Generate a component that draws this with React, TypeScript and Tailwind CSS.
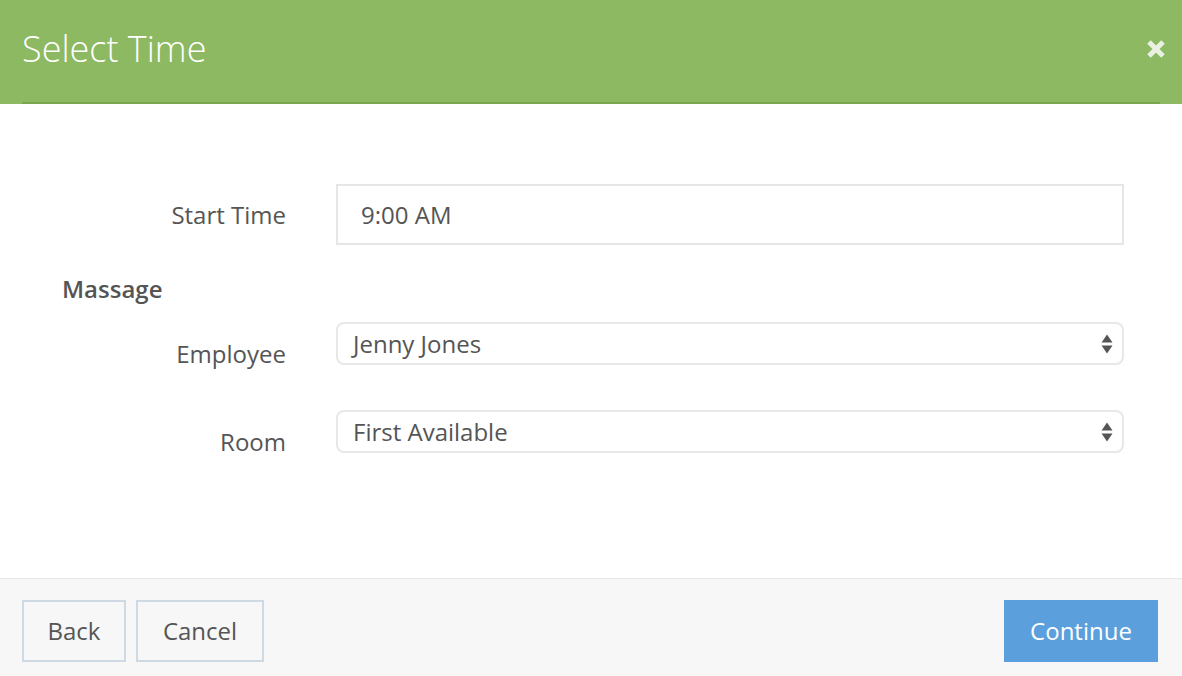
import React from "react";

function SelectArrows() {
  return (
    <svg width="12" height="21" viewBox="0 0 12 21" className="absolute right-[9px] top-1/2 -translate-y-1/2">
      <path d="M6 1 L11.5 9 L0.5 9 Z" fill="#555" />
      <path d="M0.5 12 L11.5 12 L6 20 Z" fill="#555" />
    </svg>
  );
}

function SelectBox({ value }: { value: string }) {
  return (
    <div className="relative flex h-[43px] w-[788px] items-center rounded-[8px] border-2 border-[#e8e8e8] bg-white pl-[15px] text-[24px] text-[#555]">
      {value}
      <SelectArrows />
    </div>
  );
}

export default function App() {
  return (
    <div className="flex h-[676px] w-[1182px] flex-col bg-white font-['Open_Sans',sans-serif] text-[#555]">
      <div className="relative flex h-[104px] flex-col bg-[#8db962]">
        <div className="flex flex-1 items-center justify-between pl-[22px] pr-[16px] pb-[4px]">
          <h1 className="text-[36px] font-light text-white">Select Time</h1>
          <button className="text-[#eaf1e2]">
            <svg width="20" height="20" viewBox="0 0 20 20">
              <path d="M3 3 L17 17 M17 3 L3 17" stroke="currentColor" strokeWidth="5" strokeLinecap="butt" />
            </svg>
          </button>
        </div>
        <div className="mx-[22px] h-[2px] bg-[#7aa650]" />
      </div>

      <div className="flex-1 pt-[80px]">
        <div className="flex">
          <div className="w-[286px] text-right text-[24px] leading-[61px]">Start Time</div>
          <div className="ml-[50px] flex h-[61px] w-[788px] items-center border-2 border-[#e6e6e6] pl-[23px] text-[24px]">
            9:00 AM
          </div>
        </div>

        <div className="mt-[27px] pl-[62px] text-[24px] font-semibold leading-[33px]">Massage</div>

        <div className="mt-[17px] flex">
          <div className="w-[286px] pt-[15px] text-right text-[24px] leading-[33px]">Employee</div>
          <div className="ml-[50px]">
            <SelectBox value="Jenny Jones" />
          </div>
        </div>

        <div className="mt-[40px] flex">
          <div className="w-[286px] pt-[15px] text-right text-[24px] leading-[33px]">Room</div>
          <div className="ml-[50px]">
            <SelectBox value="First Available" />
          </div>
        </div>
      </div>

      <div className="flex h-[98px] items-start justify-between border-t border-[#e8e8e8] bg-[#f7f7f7] pl-[22px] pr-[24px] pt-[21px]">
        <div className="flex gap-[10px]">
          <button className="h-[62px] w-[104px] border-2 border-[#cfd9e4] bg-transparent text-[24px] text-[#555]">Back</button>
          <button className="h-[62px] w-[128px] border-2 border-[#cfd9e4] bg-transparent text-[24px] text-[#555]">Cancel</button>
        </div>
        <button className="h-[62px] w-[154px] bg-[#5b9fdc] text-[24px] text-white">Continue</button>
      </div>
    </div>
  );
}
